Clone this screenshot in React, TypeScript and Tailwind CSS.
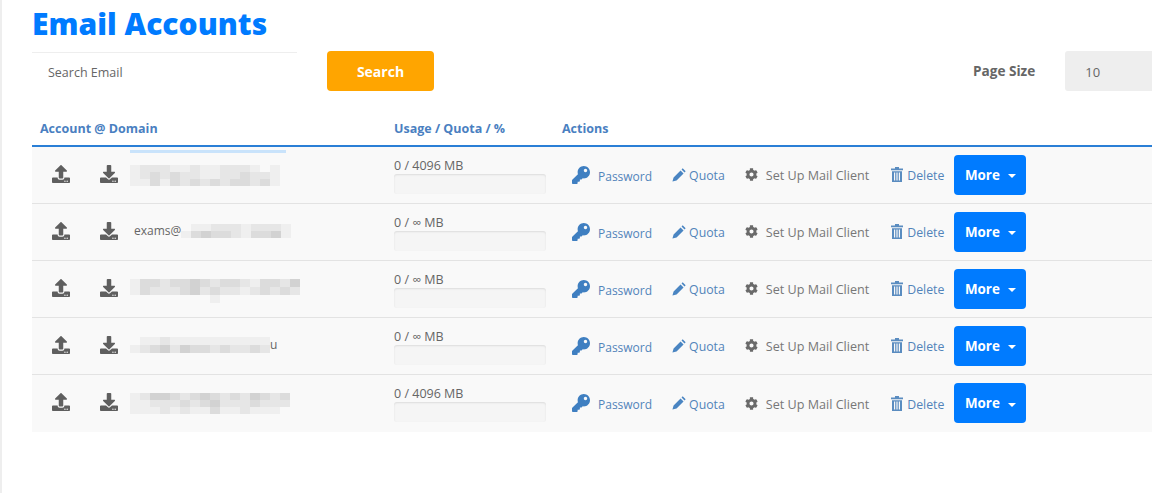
import { FaCog, FaDownload, FaKey, FaUpload } from 'react-icons/fa';

const tones: Record<string, string> = {
  '.': 'bg-transparent',
  a: 'bg-[#efefef]',
  b: 'bg-[#e6e6e6]',
  c: 'bg-[#dcdcdc]',
  d: 'bg-[#d2d2d2]',
};

// pixelated address blocks, one string per band
const Mosaic = ({ bands, bandClass }: { bands: string[]; bandClass: string }) => (
  <div className="flex flex-col">
    {bands.map((band, i) => (
      <div key={i} className={`flex ${bandClass}`}>
        {band.split('').map((tone, j) => (
          <div key={j} className={`h-full w-[10px] ${tones[tone]}`} />
        ))}
      </div>
    ))}
  </div>
);

const rows = [
  { quota: '4096', bands: ['abbbaabaabbba.a', 'abcbcbbaabbcbba', 'aacacbcbcbccbca'], bandClass: 'h-[7px]', underline: true, left: 'ml-[12px]' },
  { quota: '∞', prefix: 'exams@', bands: ['.aabbbabbba', 'acdccbaccda'], bandClass: 'h-[7px]', left: 'ml-[16px]' },
  { quota: '∞', bands: ['accbccdcbccbaccbd', 'acbbbcdbcbbabcbcb', '........a.'], bandClass: 'h-[8px]', left: 'ml-[12px]' },
  { quota: '∞', bands: ['.aabaaaaaaaaaa', 'abcdbdccbcbbcb'], bandClass: 'h-[8px]', tail: 'u', left: 'ml-[12px]' },
  { quota: '4096', bands: ['abddcbcdcbcbdcbc', 'aabbbcbcdbbbcbbb', 'aaababaacaabaaa'], bandClass: 'h-[7px]', left: 'ml-[12px]' },
];

const PencilIcon = () => (
  <svg viewBox="0 0 16 16" className="ml-[20px] h-[14px] w-[14px] fill-[#4a85c2]">
    <path d="M0.5 15.5 L1.8 10.8 L9.8 2.8 L13.2 6.2 L5.2 14.2 Z M10.9 1.7 L12.2 0.4 L15.6 3.8 L14.3 5.1 Z" />
  </svg>
);

const TrashIcon = () => (
  <svg viewBox="0 0 12 15" className="ml-[22px] h-[15px] w-[12px] fill-[#5a8cc0]">
    <path d="M4 0 H8 V1.5 H12 V3.2 H0 V1.5 H4 Z" />
    <path d="M1 4.2 H11 V15 H1 Z M3 5.5 V13.5 H4.2 V5.5 Z M5.4 5.5 V13.5 H6.6 V5.5 Z M7.8 5.5 V13.5 H9 V5.5 Z" fillRule="evenodd" />
  </svg>
);

const Row = ({ row }: { row: (typeof rows)[number] }) => (
  <div className="flex h-[57px] border-b border-[#e3e3e3] bg-[#f9f9f9] last:border-b-0">
    <div className="flex w-[362px] items-start pt-[18px]">
      <FaUpload className="ml-[20px] text-[18px] text-[#5f5f5f]" />
      <FaDownload className="ml-[30px] text-[18px] text-[#5f5f5f]" />
      <div className={`relative flex min-h-[18px] items-center ${row.left}`}>
        {row.underline && <div className="absolute top-[-15px] left-0 h-[3px] w-[156px] bg-[#c9e3fb]" />}
        {row.prefix && <span className="text-[12px] leading-[18px] text-[#666]">{row.prefix}</span>}
        <Mosaic bands={row.bands} bandClass={row.bandClass} />
        {row.tail && <span className="text-[12px] leading-[18px] text-[#666]">{row.tail}</span>}
      </div>
    </div>
    <div className="w-[168px] pt-[11px]">
      <div className="text-[12.5px] leading-[16px] text-[#666]">0 / {row.quota} MB</div>
      <div className="h-[20px] w-[152px] rounded-[3px] bg-[#f5f5f5] shadow-[inset_0_1px_2px_rgba(0,0,0,0.1)]" />
    </div>
    <div className="flex items-center pl-[10px] pb-[1px] text-[12px]">
      <FaKey className="text-[18px] text-[#3f7fc1]" />
      <span className="relative top-[2px] ml-[8px] text-[#5284ba]">Password</span>
      <PencilIcon />
      <span className="relative top-[2px] ml-[3px] text-[12.3px] text-[#5284ba]">Quota</span>
      <FaCog className="ml-[20px] text-[13px] text-[#6a6a6a]" />
      <span className="relative top-[2px] ml-[8px] text-[12.6px] text-[#777]">Set Up Mail Client</span>
      <TrashIcon />
      <span className="relative top-[2px] ml-[4px] text-[12.3px] text-[#5284ba]">Delete</span>
      <button className="ml-[10px] flex h-[40px] w-[72px] items-center justify-center gap-[8px] rounded-[4px] bg-[#007bff] pt-[1px] text-[13.4px] font-bold text-white">
        More
        <span className="mt-[2px] h-0 w-0 border-x-[4px] border-t-[4px] border-x-transparent border-t-white" />
      </button>
    </div>
  </div>
);

export default function App() {
  return (
    <div className="h-[493px] w-[1152px] overflow-hidden border-l-2 border-[#eeeeee] bg-white font-['Open_Sans',sans-serif]">
      <div className="pl-[30px]">
        <h1 className="h-[51px] pt-[5px] text-[30px] leading-[38px] font-extrabold text-[#007bff]">Email Accounts</h1>
        <div className="flex items-start">
          <div className="mt-[1px] flex h-[40px] w-[265px] shrink-0 items-center border-t border-[#eeeeee] pt-[1px] pl-[16px] text-[12.5px] text-[#666]">
            Search Email
          </div>
          <button className="ml-[30px] h-[40px] w-[107px] shrink-0 rounded-[4px] bg-[#ffa500] text-[14px] font-bold text-white">
            Search
          </button>
          <div className="ml-[539px] flex h-[40px] shrink-0 items-center text-[13.6px] font-bold whitespace-nowrap text-[#666]">
            Page Size
          </div>
          <div className="ml-[30px] flex h-[40px] w-[120px] shrink-0 items-center rounded-[3px] bg-[#eeeeee] pt-[3px] pl-[20px] text-[13px] text-[#666]">
            10
          </div>
        </div>
        <div className="mt-[21px] flex h-[34px] w-[1200px] items-center border-b-2 border-[#2a7fd6] text-[12.5px] font-bold text-[#4a7fc1]">
          <div className="w-[362px] pl-[8px]">Account @ Domain</div>
          <div className="w-[168px]">Usage / Quota / %</div>
          <div>Actions</div>
        </div>
        <div className="w-[1200px]">
          {rows.map((row, i) => (
            <Row key={i} row={row} />
          ))}
        </div>
      </div>
    </div>
  );
}
